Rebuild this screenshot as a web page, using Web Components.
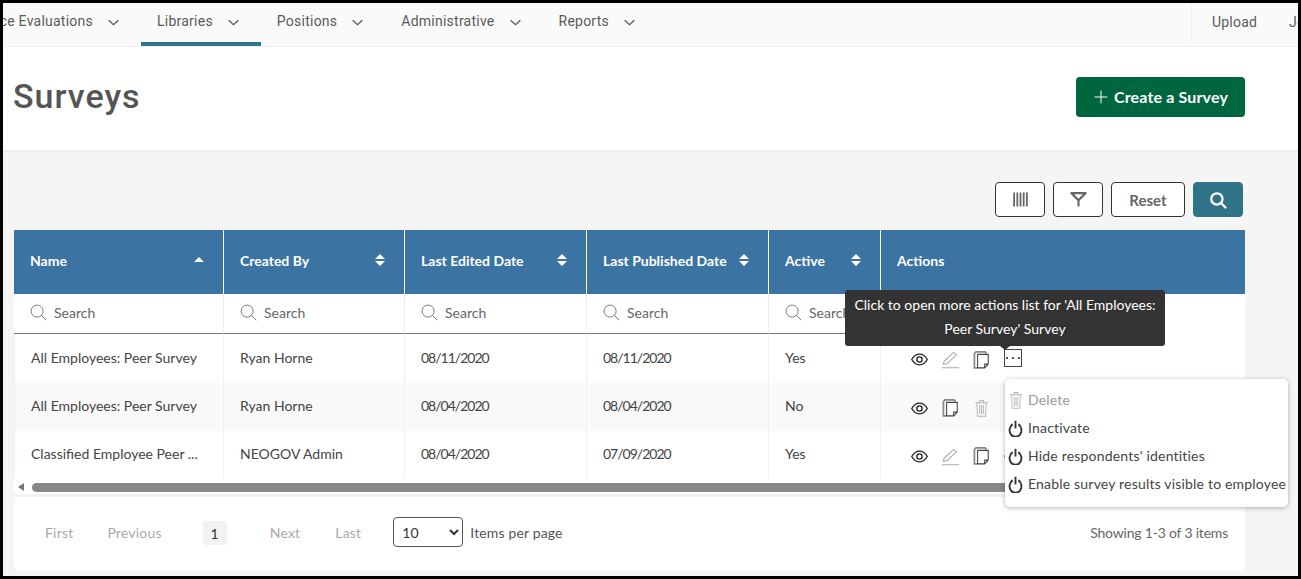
<!DOCTYPE html>
<html>
<head>
<meta charset="utf-8">
<title>Surveys</title>
<style>
  html, body { margin: 0; height: 100%; }
  body { background: #000; padding: 3px 3px 3px 3px; box-sizing: border-box; overflow: hidden; font-family: "Lato", "Liberation Sans", sans-serif; color: #444; }
</style>
</head>
<body>
<app-frame>
  <top-nav>
    <nav-tab clipped>Performance Evaluations</nav-tab>
    <nav-tab active>Libraries</nav-tab>
    <nav-tab>Positions</nav-tab>
    <nav-tab>Administrative</nav-tab>
    <nav-tab>Reports</nav-tab>
    <span slot="right">Upload</span>
    <span slot="right">Jobs</span>
  </top-nav>
  <page-header>Surveys<span slot="action">Create a Survey</span></page-header>
  <survey-panel>
    <survey-row name="All Employees: Peer Survey" by="Ryan Horne" edited="08/11/2020" published="08/11/2020" active="Yes" actions="view edit copy more"></survey-row>
    <survey-row shaded name="All Employees: Peer Survey" by="Ryan Horne" edited="08/04/2020" published="08/04/2020" active="No" actions="view copy trash"></survey-row>
    <survey-row last name="Classified Employee Peer ..." by="NEOGOV Admin" edited="08/04/2020" published="07/09/2020" active="Yes" actions="view edit copy peek"></survey-row>
    <hover-tip slot="over">Click to open more actions list for 'All Employees: Peer Survey' Survey</hover-tip>
    <more-menu slot="over"></more-menu>
  </survey-panel>
</app-frame>

<script>
// shared icon strokes, all drawn on a 24 box
const ICONS = {
  chevron: '<path d="M3 8l9 8 9-8" fill="none" stroke="currentColor" stroke-width="2.4"/>',
  plus: '<path d="M12 1v22M1 12h22" fill="none" stroke="currentColor" stroke-width="1.7"/>',
  columns: '<path d="M3 2v20M7.500 2v20M12 2v20M16.500 2v20M21 2v20" fill="none" stroke="currentColor" stroke-width="2.5"/>',
  funnel: '<path d="M2 3h20l-10 10zM12 13v9" fill="none" stroke="currentColor" stroke-width="3" stroke-linejoin="round"/>',
  search: '<circle cx="10.5" cy="10.5" r="7.5" fill="none" stroke="currentColor" stroke-width="3"/><path d="M16 16l6 6" stroke="currentColor" stroke-width="3.2" stroke-linecap="round"/>',
  find: '<circle cx="10" cy="10" r="8.500" fill="none" stroke="currentColor" stroke-width="1.200"/><path d="M16 16l7 7" stroke="currentColor" stroke-width="1.200"/>',
  view: '<path d="M1 12c3-5 7-7.500 11-7.500s8 2.500 11 7.500c-3 5-7 7.500-11 7.500S4 17 1 12z" fill="none" stroke="#222" stroke-width="1.900"/><circle cx="12" cy="12" r="3.700" fill="none" stroke="#222" stroke-width="1.900"/>',
  edit: '<path d="M3 18l1-4L16 3l3.500 3L8 17zM1 22.500h22" fill="none" stroke="#aaa" stroke-width="1.300"/>',
  copy: '<path d="M7 22.500H2V3.500L4.500 1H17l2 2" fill="none" stroke="#888" stroke-width="2.400"/><path d="M6.500 4.500h15v13l-5 5h-10zM21.500 17.500h-5v5" fill="#fff" stroke="#444" stroke-width="1.500"/>',
  trash: '<path d="M2 5h20M8 5l1-3h6l1 3M4.500 5l1 18h13l1-18M9 8v12M12 8v12M15 8v12" fill="none" stroke="#b4b4b4" stroke-width="1.500"/>',
  power: '<path d="M7.500 6A9.500 9.500 0 1 0 16.500 6M12 1v11" fill="none" stroke="#333" stroke-width="3"/>'
};
function icon(name, w, h) {
  return `<svg width="${w}" height="${h || w}" viewBox="0 0 24 24" style="display:block" ${(h && h !== w) ? 'preserveAspectRatio="none"' : ''}>${ICONS[name]}</svg>`;
}

class AppFrame extends HTMLElement {
  constructor() {
    super();
    this.attachShadow({ mode: "open" }).innerHTML = `
      <style>
        :host { display: flex; flex-direction: column; height: 100%; background: #f5f5f5; overflow: hidden; }
      </style>
      <slot></slot>`;
  }
}

class TopNav extends HTMLElement {
  constructor() {
    super();
    this.attachShadow({ mode: "open" }).innerHTML = `
      <style>
        :host { display: flex; justify-content: space-between; height: 44px; flex: none; background: #fafafa; border-bottom: 1px solid #efefef; box-sizing: border-box; font: 14px "Roboto", "Liberation Sans", sans-serif; color: #5a5a5a; }
        .left { display: flex; }
        .right { display: flex; width: 107px; box-sizing: border-box; overflow: hidden; height: 39px; padding: 0 0 2px 20px; border-left: 1px solid #f0f0f0; align-items: center; white-space: nowrap; }
        ::slotted([slot="right"]) { margin-right: 32px; letter-spacing: .2px; }
      </style>
      <div class="left"><slot></slot></div>
      <div class="right"><slot name="right"></slot></div>`;
  }
}

class NavTab extends HTMLElement {
  constructor() {
    super();
    this.attachShadow({ mode: "open" }).innerHTML = `
      <style>
        :host { display: flex; align-items: center; gap: 14px; height: 43px; padding: 0 21px 8px 16px; box-sizing: border-box; white-space: nowrap; letter-spacing: .24px; }
        :host([active]) { box-shadow: inset 0 -4px 0 #2f7389; }
        :host([clipped]) { width: 138px; justify-content: flex-end; overflow: hidden; padding-left: 0; flex: none; }
        svg { flex: none; margin-top: 3px; }
      </style>
      <slot></slot>${icon("chevron", 13, 13)}`;
  }
}

class PageHeader extends HTMLElement {
  constructor() {
    super();
    this.attachShadow({ mode: "open" }).innerHTML = `
      <style>
        :host { display: flex; justify-content: space-between; align-items: center; height: 105px; flex: none; box-sizing: border-box; background: #fff; border-bottom: 2px solid #efefef; padding: 0 53px 3px 10px; font: 500 34px "Roboto", sans-serif; color: #555; }
        .title { letter-spacing: 1px; margin-bottom: 2px; }
        .create { display: flex; align-items: center; gap: 6px; width: 169px; height: 40px; box-sizing: border-box; padding-left: 18px; background: #00663f; color: #fff; border-radius: 4px; font: 700 16px "Lato", sans-serif; letter-spacing: .15px; }
        .create span { padding-bottom: 2px; }
        .create svg { margin-top: -1px; }
      </style>
      <div class="title"><slot></slot></div>
      <div class="create">${icon("plus", 14)}<span><slot name="action"></slot></span></div>`;
  }
}

class SurveyPanel extends HTMLElement {
  constructor() {
    super();
    const heads = [
      ["Name", "up"], ["Created By", "both"], ["Last Edited Date", "both"],
      ["Last Published Date", "both"], ["Active", "both"], ["Actions", ""]
    ];
    const sort = s => s === "up"
      ? '<svg width="10" height="12" viewBox="0 0 10 12"><path d="M0 8l5-5 5 5z" fill="#fff"/></svg>'
      : s === "both"
        ? '<svg width="10" height="12" viewBox="0 0 10 12"><path d="M0 5l5-5 5 5zM0 7l5 5 5-5z" fill="#fff"/></svg>' : "";
    this.attachShadow({ mode: "open" }).innerHTML = `
      <style>
        :host { display: block; flex: 1; min-height: 0; padding: 30px 53px 0 11px; --cols: 209px 181px 182px 182px 112px 1fr; }
        .tools { display: flex; justify-content: flex-end; gap: 8px; height: 35px; margin-bottom: 13px; padding-right: 2px; }
        .tool { display: flex; align-items: center; justify-content: center; width: 50px; box-sizing: border-box; background: #fff; border: 1px solid #333; border-radius: 4px; color: #666; font: 700 15px "Lato", sans-serif; }
        .tool.reset { width: 74px; }
        .tool.go { background: #2f7389; border-color: #2f7389; color: #fff; }
        .table { position: relative; }
        .head, .filters { display: grid; grid-template-columns: var(--cols); }
        .head { height: 64px; background: #3b73a3; color: #fff; font: 700 14px "Lato", sans-serif; }
        .head div { display: flex; align-items: center; justify-content: space-between; padding: 0 19px 4px 16px; border-left: 1px solid #fff; }
        .head div:first-child { border-left: 0; }
        .filters { height: 40px; background: #fff; color: #666; font-size: 14px; }
        .filters div { display: flex; align-items: center; gap: 7px; padding: 0 0 2px 16px; border-left: 1px solid #eee; border-bottom: 1px solid #777; }
        .filters div:first-child { border-left: 0; }
        .filters div:last-child { visibility: hidden; }
        .scroll { display: flex; align-items: center; gap: 8px; height: 18px; box-sizing: border-box; padding: 1px 0 0 4px; background: #fff; border-bottom: 3px solid #f1f1f1; }
        .scroll i { display: block; height: 9px; width: 1100px; background: #888; border-radius: 5px; }
        .scroll b { width: 0; height: 0; border: 4.500px solid transparent; border-right: 6px solid #777; border-left: 0; }
      </style>
      <div class="tools">
        <div class="tool">${icon("columns", 17)}</div>
        <div class="tool">${icon("funnel", 17)}</div>
        <div class="tool reset">Reset</div>
        <div class="tool go">${icon("search", 18)}</div>
      </div>
      <div class="table">
        <div class="head">${heads.map(h => `<div><span>${h[0]}</span>${sort(h[1])}</div>`).join("")}</div>
        <div class="filters">${heads.map(() => `<div>${icon("find", 17)}<span>Search</span></div>`).join("")}</div>
        <slot></slot>
        <div class="scroll"><b></b><i></i></div>
        <survey-pager></survey-pager>
        <slot name="over"></slot>
      </div>`;
  }
}

class SurveyRow extends HTMLElement {
  connectedCallback() {
    const a = n => this.getAttribute(n);
    const acts = a("actions").split(" ").map(n => {
      if (n === "more") return '<span class="slot"><span class="more"><i></i><i></i><i></i></span></span>';
      if (n === "peek") return '<span class="slot"><span class="peek"></span></span>';
      const sizes = { view: [17, 17], edit: [19, 19], copy: [17, 18], trash: [15, 18] }[n];
      return `<span class="slot">${icon(n, sizes[0], sizes[1])}</span>`;
    }).join("");
    const lift = this.hasAttribute("shaded") || this.hasAttribute("last") ? 4 : 2;
    this.attachShadow({ mode: "open" }).innerHTML = `
      <style>
        :host { display: grid; grid-template-columns: var(--cols); height: 48px; background: #fff; font-size: 14px; color: #444; }
        :host(:first-of-type) { height: 49px; }
        :host([shaded]) { background: #f9f9f9; }
        div { display: flex; align-items: center; padding: 0 0 ${lift}px 16px; border-left: 1px solid #f0f0f0; white-space: nowrap; }
        div:first-child { border-left: 0; padding-left: 15px; }
        .date { letter-spacing: -1px; }
        .acts { padding: 0 0 0 23px; }
        .slot { display: flex; justify-content: center; width: 31px; position: relative; top: 1px; }
        .more { display: flex; align-items: center; justify-content: center; gap: 4px; width: 16px; height: 16px; border: 1px solid #444; position: relative; top: -2px; }
        .more i { width: 2px; height: 2px; background: #555; }
        .peek { width: 1px; height: 3px; background: #c8975a; margin-right: 16px; }
      </style>
      <div>${a("name")}</div><div>${a("by")}</div><div class="date">${a("edited")}</div>
      <div class="date">${a("published")}</div><div>${a("active")}</div><div class="acts">${acts}</div>`;
  }
}

class SurveyPager extends HTMLElement {
  constructor() {
    super();
    this.attachShadow({ mode: "open" }).innerHTML = `
      <style>
        :host { display: flex; align-items: center; height: 74px; background: #fff; border-radius: 0 0 5px 5px; font-size: 14px; color: #aaa; padding: 0 17px 2px 31px; box-sizing: border-box; }
        .links { display: flex; align-items: center; letter-spacing: .2px; }
        .links span:not(.cur) { position: relative; top: -1px; }
        .cur { display: flex; align-items: center; justify-content: center; width: 24px; height: 24px; background: #f1f2f4; color: #333; border-radius: 2px; margin: 0 43px 0 41px; }
        .links span:first-child { margin-right: 34px; }
        .links span:nth-child(4) { margin-right: 35px; }
        select { width: 70px; height: 30px; margin: -2px 7px 0 32px; padding-left: 4px; background: #fff; color: #333; border: 1px solid #555; border-radius: 4px; font: 14px "Lato", sans-serif; }
        .per { color: #555; letter-spacing: .15px; position: relative; top: -1px; }
        .count { margin-left: auto; color: #666; letter-spacing: -.2px; position: relative; top: -1px; }
      </style>
      <div class="links"><span>First</span><span>Previous</span><span class="cur">1</span><span>Next</span><span>Last</span></div>
      <select><option>10</option><option>25</option><option>50</option></select>
      <span class="per">Items per page</span>
      <span class="count">Showing 1-3 of 3 items</span>`;
  }
}

class HoverTip extends HTMLElement {
  constructor() {
    super();
    this.attachShadow({ mode: "open" }).innerHTML = `
      <style>
        :host { position: absolute; left: 831px; top: 60px; width: 320px; height: 56px; box-sizing: border-box; padding: 3px 8px; background: #333; color: #fff; border-radius: 3px; font-size: 14px; line-height: 24px; text-align: center; }
        :host::after { content: ""; position: absolute; left: 155px; top: 56px; border: 5px solid transparent; border-top: 4px solid #333; border-bottom: 0; }
      </style>
      <slot></slot>`;
  }
}

class MoreMenu extends HTMLElement {
  constructor() {
    super();
    const items = ["Inactivate", "Hide respondents' identities", "Enable survey results visible to employee"];
    this.attachShadow({ mode: "open" }).innerHTML = `
      <style>
        :host { position: absolute; left: 991px; top: 149px; width: 283px; height: 128px; box-sizing: border-box; padding: 6px 0 0 3px; background: #fff; border-radius: 5px; box-shadow: 0 1px 5px rgba(0,0,0,.3); font-size: 14px; color: #444; }
        .item { display: flex; align-items: center; gap: 5px; height: 28px; white-space: nowrap; letter-spacing: .19px; }
        .item svg { flex: none; margin: 2px 0 0 0; }
        .ic { display: flex; justify-content: center; width: 15px; }
        .off { color: #999; }
      </style>
      <div class="item off"><span class="ic">${icon("trash", 14, 18)}</span>Delete</div>
      ${items.map(t => `<div class="item"><span class="ic">${icon("power", 15, 17)}</span>${t}</div>`).join("")}`;
  }
}

customElements.define("app-frame", AppFrame);
customElements.define("top-nav", TopNav);
customElements.define("nav-tab", NavTab);
customElements.define("page-header", PageHeader);
customElements.define("survey-panel", SurveyPanel);
customElements.define("survey-row", SurveyRow);
customElements.define("survey-pager", SurveyPager);
customElements.define("hover-tip", HoverTip);
customElements.define("more-menu", MoreMenu);
</script>
</body>
</html>
